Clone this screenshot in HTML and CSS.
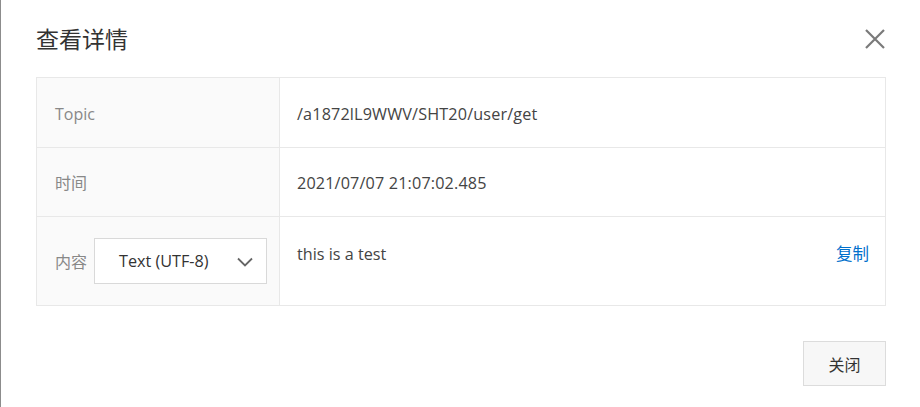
FILE: index.html
```html
<!DOCTYPE html>
<html lang="zh">
<head>
<meta charset="utf-8">
<title>查看详情</title>
<link rel="stylesheet" href="styles.css">
</head>
<body>
<div class="page">
  <div class="dialog">
    <div class="header">
      <h1 class="title">查看详情</h1>
      <button class="close" aria-label="关闭">
        <svg width="20" height="20" viewBox="0 0 20 20"><path d="M1 1 L19 19 M19 1 L1 19" stroke="#7a7a7a" stroke-width="2.2" fill="none"/></svg>
      </button>
    </div>
    <div class="detail">
      <div class="cell label row-a">Topic</div>
      <div class="cell value row-a">/a1872lL9WWV/SHT20/user/get</div>
      <div class="cell label row-b">时间</div>
      <div class="cell value row-b">2021/07/07 21:07:02.485</div>
      <div class="cell label label-content">
        <span class="content-label">内容</span>
        <div class="select">
          <span class="select-text">Text (UTF-8)</span>
          <svg class="chev" width="16" height="10" viewBox="0 0 16 10"><path d="M1 1.5 L8 8.5 L15 1.5" stroke="#666" stroke-width="1.8" fill="none"/></svg>
        </div>
      </div>
      <div class="cell value value-content">
        <span>this is a test</span>
        <a class="copy" href="#">复制</a>
      </div>
    </div>
    <div class="footer">
      <button class="btn">关闭</button>
    </div>
  </div>
</div>
</body>
</html>
```
FILE: styles.css
```css
html, body {
  margin: 0;
  padding: 0;
  background: #fff;
}
body {
  font-family: "Open Sans", "Noto Sans CJK SC", sans-serif;
  color: #333;
}
.page {
  border-left: 1px solid #8c8c8c;
  height: 407px;
  box-sizing: border-box;
}
.dialog {
  padding: 0 34px 0 35px;
}
.header {
  height: 77px;
  display: flex;
  align-items: center;
  justify-content: space-between;
}
.title {
  margin: 0;
  font-size: 23px;
  font-weight: 400;
  color: #333;
  line-height: 30px;
}
.close {
  border: 0;
  background: none;
  padding: 0;
  margin-right: 1px;
  width: 20px;
  height: 20px;
  display: flex;
}
.detail {
  display: grid;
  grid-template-columns: 243px 1fr;
  grid-template-rows: 70px 69px 89px;
  border-top: 1px solid #e8e8e8;
  border-left: 1px solid #e8e8e8;
  font-size: 16.2px;
  line-height: 22px;
}
.cell {
  border-right: 1px solid #e8e8e8;
  border-bottom: 1px solid #e8e8e8;
  display: flex;
  align-items: center;
  box-sizing: border-box;
}
.label {
  background: #fafafa;
  color: #888;
  padding: 2px 12px 0 18px;
  font-size: 16px;
}
.value {
  color: #444;
  padding: 2px 16px 0 17px;
  letter-spacing: 0.15px;
}
.label-content {
  gap: 7px;
  padding-top: 0;
}
.content-label {
  padding-top: 2px;
}
.select {
  flex: 1;
  height: 46px;
  box-sizing: border-box;
  border: 1px solid #d9d9d9;
  background: #fff;
  display: flex;
  align-items: center;
  justify-content: space-between;
  padding: 0 13px 0 24px;
  color: #333;
  font-size: 16.2px;
}
.chev {
  display: block;
  margin-top: 2px;
}
.value-content {
  align-items: flex-start;
  justify-content: space-between;
  padding-top: 26px;
  letter-spacing: 0;
}
.copy {
  color: #0070cc;
  text-decoration: none;
  font-size: 16.5px;
}
.footer {
  display: flex;
  justify-content: flex-end;
  padding-top: 35px;
}
.btn {
  width: 83px;
  height: 45px;
  border: 1px solid #dcdcdc;
  background: #f7f7f7;
  font-family: "Open Sans", "Noto Sans CJK SC", sans-serif;
  font-size: 16px;
  color: #333;
  padding: 0;
}
```
